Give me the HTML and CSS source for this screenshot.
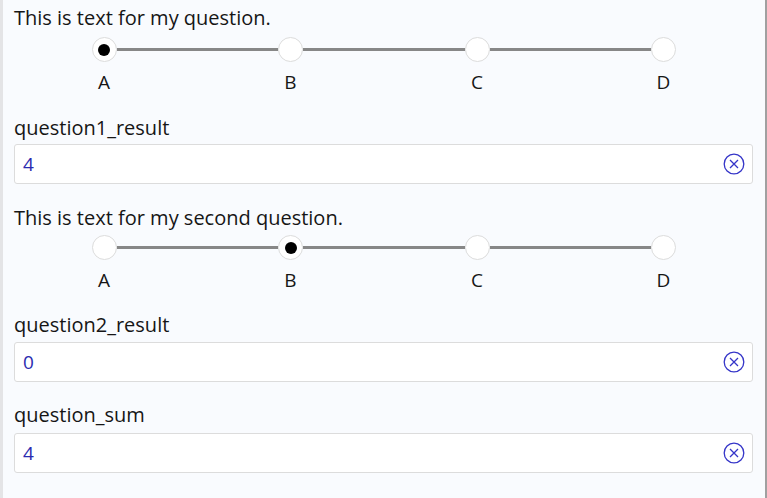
FILE: index.html
```html
<!DOCTYPE html>
<html>
<head>
<meta charset="utf-8">
<link rel="stylesheet" href="styles.css">
</head>
<body>
<div class="page">
  <div class="qtext q1">This is text for my question.</div>
  <div class="slider">
    <span class="stop on"></span><span class="track"></span>
    <span class="stop"></span><span class="track"></span>
    <span class="stop"></span><span class="track"></span>
    <span class="stop"></span>
    <span class="lbl">A</span><span></span>
    <span class="lbl">B</span><span></span>
    <span class="lbl">C</span><span></span>
    <span class="lbl">D</span>
  </div>
  <div class="flabel l1">question1_result</div>
  <div class="field f1"><span class="val">4</span>
    <svg class="clear" width="22" height="22" viewBox="0 0 22 22"><circle cx="11" cy="11" r="9.8" fill="none" stroke="#3535c8" stroke-width="1.3"/><path d="M7 7 L15 15 M15 7 L7 15" stroke="#3535c8" stroke-width="1.3" fill="none"/></svg>
  </div>

  <div class="qtext q2">This is text for my second question.</div>
  <div class="slider s2">
    <span class="stop"></span><span class="track"></span>
    <span class="stop on"></span><span class="track"></span>
    <span class="stop"></span><span class="track"></span>
    <span class="stop"></span>
    <span class="lbl">A</span><span></span>
    <span class="lbl">B</span><span></span>
    <span class="lbl">C</span><span></span>
    <span class="lbl">D</span>
  </div>
  <div class="flabel l2">question2_result</div>
  <div class="field f2"><span class="val">0</span>
    <svg class="clear" width="22" height="22" viewBox="0 0 22 22"><circle cx="11" cy="11" r="9.8" fill="none" stroke="#3535c8" stroke-width="1.3"/><path d="M7 7 L15 15 M15 7 L7 15" stroke="#3535c8" stroke-width="1.3" fill="none"/></svg>
  </div>

  <div class="flabel l3">question_sum</div>
  <div class="field f3"><span class="val">4</span>
    <svg class="clear" width="22" height="22" viewBox="0 0 22 22"><circle cx="11" cy="11" r="9.8" fill="none" stroke="#3535c8" stroke-width="1.3"/><path d="M7 7 L15 15 M15 7 L7 15" stroke="#3535c8" stroke-width="1.3" fill="none"/></svg>
  </div>
</div>
</body>
</html>
```

FILE: styles.css
```css
html, body {
  margin: 0;
  padding: 0;
  height: 100%;
}
body {
  background: #f9fbfe;
  font-family: "Open Sans", "Noto Sans", sans-serif;
  color: #161616;
}
.page {
  box-sizing: border-box;
  height: 498px;
  border-left: 3px solid #e4e4e6;
  border-right: 2px solid #a0a0a0;
  padding: 0 12px 0 11px;
  overflow: hidden;
}
.qtext {
  font-size: 20px;
  line-height: 24px;
}
.q1 { margin-top: 6px; }
.q2 { margin-top: 22px; }
.slider {
  display: grid;
  grid-template-columns: 25px 1fr 25px 1fr 25px 1fr 25px;
  grid-template-rows: 25px 22px;
  row-gap: 9px;
  margin: 7px 77px 0 77.5px;
  align-items: center;
}
.s2 { margin-top: 5px; }
.stop {
  box-sizing: border-box;
  width: 25px;
  height: 25px;
  border-radius: 50%;
  background: #fff;
  border: 1px solid #dcdcdc;
  display: flex;
  align-items: center;
  justify-content: center;
}
.stop.on::after {
  content: "";
  width: 12px;
  height: 12px;
  border-radius: 50%;
  background: #000;
}
.track {
  height: 3px;
  background: #878787;
}
.lbl {
  justify-self: center;
  font-size: 19px;
  line-height: 22px;
  text-align: center;
}
.flabel {
  font-size: 20px;
  line-height: 24px;
}
.l1 { margin-top: 23px; }
.l2 { margin-top: 22px; }
.l3 { margin-top: 21px; }
.field {
  box-sizing: border-box;
  height: 40px;
  background: #fff;
  border: 1px solid #dcdcdc;
  border-radius: 3px;
  display: flex;
  align-items: center;
  justify-content: space-between;
  padding: 0 7px 0 8px;
}
.f1 { margin-top: 4px; }
.f2 { margin-top: 5px; }
.f3 { margin-top: 6px; }
.val {
  color: #2b2bb0;
  font-size: 19px;
}
.clear {
  display: block;
}
```
